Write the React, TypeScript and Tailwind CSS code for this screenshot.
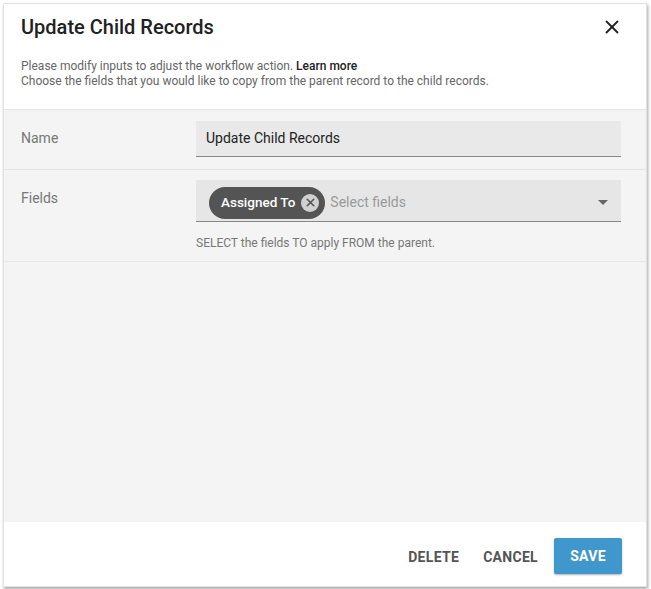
import { X } from "lucide-react";

const App = () => {
  return (
    <div className="h-[589px] w-[651px] bg-white pt-[3px] pl-[3px] pr-[4px] pb-[2px] font-['Roboto',sans-serif]">
      <div className="flex h-full flex-col border border-[#e2e2e2] bg-[#f4f4f4] shadow-[1px_2px_3px_rgba(0,0,0,0.35)]">
        <div className="border-b border-[#e6e6e6] bg-white px-[17px] pt-[11px] pb-[20px]">
          <div className="flex items-center justify-between">
            <h1 className="text-[20px] font-medium leading-[24px] text-[#212121]">
              Update Child Records
            </h1>
            <button className="mr-[6px] text-[#222]">
              <X size={22} strokeWidth={2} />
            </button>
          </div>
          <div className="mt-[20px] text-[12px] leading-[15px] text-[#666]">
            <p>
              Please modify inputs to adjust the workflow action.{" "}
              <span className="font-medium text-[#222]">Learn more</span>
            </p>
            <p>
              Choose the fields that you would like to copy from the parent
              record to the child records.
            </p>
          </div>
        </div>

        <div className="flex h-[60px] items-start border-b border-[#e4e4e4] pt-[11px] pl-[17px] pr-[25px]">
          <label className="w-[175px] pt-[7px] text-[14px] text-[#777]">
            Name
          </label>
          <div className="flex h-[36px] flex-1 items-center border-b border-[#888] bg-[#e9e9e9] px-[10px] text-[14px] text-[#222]">
            Update Child Records
          </div>
        </div>

        <div className="flex h-[92px] items-start border-b border-[#e8e8e8] pt-[10px] pl-[17px] pr-[25px]">
          <label className="w-[175px] pt-[8px] text-[14px] text-[#777]">
            Fields
          </label>
          <div className="flex-1">
            <div className="flex h-[42px] items-center border-b border-[#888] bg-[#e6e6e6] pt-[4px] pl-[13px] pr-[12px]">
              <span className="flex h-[32px] items-center gap-[6px] rounded-full bg-[#545454] pl-[12px] pr-[6px] text-[13.5px] font-medium text-white">
                Assigned To
                <span className="flex h-[18px] w-[18px] items-center justify-center rounded-full bg-[#d0d0d0] text-[#545454]">
                  <X size={13} strokeWidth={3} />
                </span>
              </span>
              <span className="ml-[5px] flex-1 text-[14px] text-[#9a9a9a]">
                Select fields
              </span>
              <svg width="10" height="5" viewBox="0 0 10 5" className="mr-[1px]">
                <path d="M0 0 L10 0 L5 5 Z" fill="#666" />
              </svg>
            </div>
            <p className="mt-[12px] text-[12px] text-[#777]">
              SELECT the fields TO apply FROM the parent.
            </p>
          </div>
        </div>

        <div className="flex-1" />

        <div className="flex h-[64px] items-start justify-end gap-[24px] bg-white pt-[16px] pr-[24px]">
          <button className="mt-[9px] text-[14px] font-bold tracking-[0.3px] text-[#555]">
            DELETE
          </button>
          <button className="mt-[9px] text-[14px] font-bold tracking-[0.3px] text-[#555]">
            CANCEL
          </button>
          <button className="ml-[-8px] h-[36px] w-[68px] rounded-[2px] bg-[#3f97cc] text-[14px] font-bold tracking-[0.3px] text-white shadow-[0_1px_2px_rgba(0,0,0,0.3)]">
            SAVE
          </button>
        </div>
      </div>
    </div>
  );
};

export default App;
